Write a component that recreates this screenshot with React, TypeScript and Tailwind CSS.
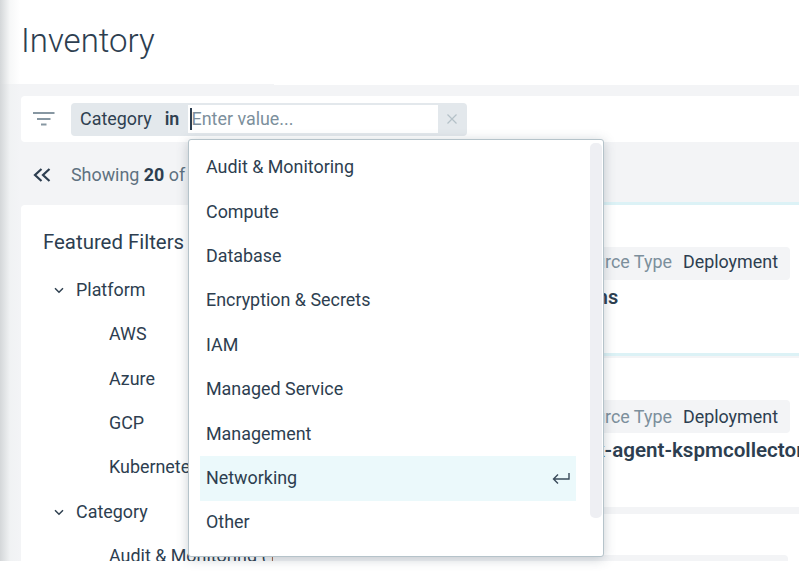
import React from "react";

const font = { fontFamily: "Roboto, 'Liberation Sans', sans-serif" };

const options = [
  "Audit & Monitoring",
  "Compute",
  "Database",
  "Encryption & Secrets",
  "IAM",
  "Managed Service",
  "Management",
  "Networking",
  "Other",
];

function Chevron({ className }: { className?: string }) {
  return (
    <svg className={className} width="10" height="7" viewBox="0 0 10 7" fill="none">
      <path d="M1 1.2 5 5.2 9 1.2" stroke="#2f4050" strokeWidth="1.5" />
    </svg>
  );
}

function TypeChip({ raised }: { raised?: boolean }) {
  return (
    <div className={`flex h-[33px] items-center justify-end self-end rounded-[4px] bg-[#f3f4f6] pl-3 pr-[12px] ${raised ? "pb-[3px]" : ""}`}>
      <span className="text-[#7c8f9c]">Resource Type</span>
      <span className="ml-[11px] text-[#2d3e50]">Deployment</span>
    </div>
  );
}

function Row({ children, indent }: { children: React.ReactNode; indent?: boolean }) {
  return <div className={`flex h-[44.4px] items-center whitespace-nowrap text-[#2d3e50] ${indent ? "pl-[88px] pb-[1px]" : "pl-[33px]"}`}>{children}</div>;
}

export default function App() {
  return (
    <div className="relative h-[573px] w-[799px] overflow-hidden bg-white text-[17.9px] leading-none" style={font}>
      <div className="relative h-[561px] overflow-hidden">
        <div className="flex h-[84px] items-start pl-[21px] pt-[21px]">
          <h1 className="text-[33px] font-light leading-[40px] text-[#2d3e50]">Inventory</h1>
        </div>
        <div className="h-px w-[274px] bg-[#f3f4f6]" />
        <div className="h-[476px] overflow-hidden bg-[#f3f4f6] pl-[21px] pt-[11px]">
          <div className="flex h-[46px] items-center rounded-l-[4px] bg-white pl-[12px]">
            <svg width="22" height="16" viewBox="0 0 22 16" fill="none" className="shrink-0">
              <path d="M0 2h21.5M4 8h13.5M8 13.5h5.5" stroke="#8797a2" strokeWidth="2" />
            </svg>
            <div className="ml-[16px] flex h-[33px] w-[396px] items-center rounded-[4px] bg-[#e3e8ec]">
              <div className="flex w-[117px] items-center pl-[9px] text-[#2f4050]">
                <span className="font-[450]">Category</span>
                <span className="ml-[13px] font-semibold">in</span>
              </div>
              <div className="flex h-[28px] w-[250px] items-center bg-white pl-[2px]">
                <span className="h-[22px] w-[1.5px] bg-[#2d3e50]" />
                <span className="text-[#7c8f9c]">Enter value...</span>
              </div>
              <svg width="10" height="10" viewBox="0 0 10 10" fill="none" className="ml-[9px]">
                <path d="M.5.5l9 9M9.500.5l-9 9" stroke="#b4c1c8" strokeWidth="1.2" />
              </svg>
            </div>
          </div>
          <div className="flex h-[60px] items-center pl-[12px] pt-[5px]">
            <svg width="18" height="14" viewBox="0 0 18 14" fill="none">
              <path d="M8.500 1 2 7l6.500 6M16.500 1 10 7l6.500 6" stroke="#2d3e50" strokeWidth="2.200" />
            </svg>
            <span className="ml-[20px] whitespace-nowrap text-[#5e7180]">
              Showing <b className="font-bold text-[#2d3e50]">20</b> of
            </span>
          </div>
          <div className="flex gap-[8px]">
            <div className="mt-[3px] h-[400px] w-[244px] shrink-0 rounded-tl-[4px] bg-white pt-[16px] text-[#2d3e50]">
              <div className="flex h-[47px] items-center whitespace-nowrap pb-[5px] pl-[22px] text-[20.4px]">Featured Filters</div>
              <Row>
                <Chevron className="mr-[12px]" />
                Platform
              </Row>
              <Row indent>AWS</Row>
              <Row indent>Azure</Row>
              <Row indent>GCP</Row>
              <Row indent>Kubernetes</Row>
              <Row>
                <Chevron className="mr-[12px]" />
                Category
              </Row>
              <Row indent>Audit &amp; Monitoring (13)</Row>
            </div>
            <div className="min-w-0 flex-1">
              <div className="flex h-[151px] flex-col overflow-hidden border-t-[3px] border-[#dcf2f6] bg-white pr-[9px] pt-[42px]">
                <TypeChip raised />
                <div className="mt-[6px] whitespace-nowrap pl-[127px] text-[20px] font-semibold leading-[22px] text-[#2d3e50]">
                  kubernetes-permissions
                </div>
              </div>
              <div className="h-[3px] bg-[#dcf2f6]" />
              <div className="h-[2px] bg-[#f3f4f6]" />
              <div className="flex h-[149px] flex-col overflow-hidden bg-white pr-[9px] pt-[42px]">
                <TypeChip />
                <div className="mt-[6px] whitespace-nowrap pl-[248px] text-[20.6px] font-semibold leading-[22px] text-[#2d3e50]">
                  twistlock-agent-kspmcollector
                </div>
              </div>
              <div className="mt-[7px] h-[60px] bg-white pr-[11px] pt-[41px]">
                <div className="h-[20px] rounded-[4px] bg-[#f3f4f6]" />
              </div>
            </div>
          </div>
        </div>
        <div className="absolute left-0 top-0 h-full w-[20px] bg-gradient-to-r from-[#d4d7d9] via-[#eef0f1]/50 to-transparent" />
      </div>

      <div className="absolute left-[188px] top-[139px] h-[418px] w-[416px] rounded-[3px] border border-[#b5c3ca] bg-white pl-[11px] pt-[5.5px] shadow-[0_2px_12px_rgba(60,80,95,0.28)]">
        {options.map((o) => (
          <div
            key={o}
            className={`flex h-[44.4px] w-[376px] items-center justify-between pb-[1px] pl-[6px] pr-[6px] text-[#2d3e50] ${o === "Networking" ? "bg-[#ebf9fb]" : ""}`}
          >
            {o}
            {o === "Networking" && (
              <svg width="18" height="12" viewBox="0 0 18 12" fill="none">
                <path d="M17 1v6H1.500M6 2.500 1.500 7 6 11.500" stroke="#3a4b5a" strokeWidth="1.400" />
              </svg>
            )}
          </div>
        ))}
        <div className="absolute right-[1px] top-[3px] h-[375px] w-[12px] rounded-[5px] bg-[#eeeff3]" />
      </div>
    </div>
  );
}
